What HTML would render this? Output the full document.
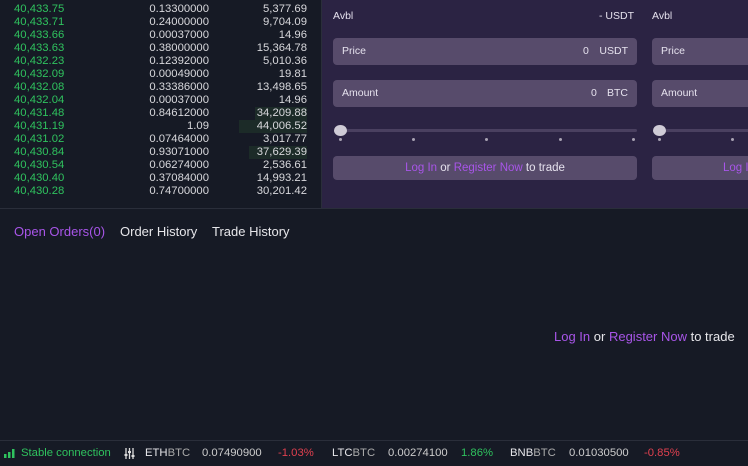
<!DOCTYPE html>
<html><head><style>
*{margin:0;padding:0;box-sizing:border-box}
body{width:748px;height:465px;background:#161a25;font-family:"Liberation Sans",sans-serif;position:relative;overflow:hidden;color:#e6e6ea}
.ob{position:absolute;left:0;top:0;width:321px;height:208px;background:#161a25}
.row{position:absolute;left:0;width:321px;height:13px;font-size:11.3px;line-height:13px}
.row .p{position:absolute;left:14px;color:#2fc25e}
.row .a{position:absolute;right:112px;color:#d8d8dc}
.row .t{position:absolute;right:14px;color:#d8d8dc}
.row .bar{position:absolute;right:14px;top:0;height:13px;background:#1c2b28}
.vline{position:absolute;left:321px;top:0;width:1px;height:208px;background:#2a2e3a}
.panel{position:absolute;left:322px;top:0;width:426px;height:208px;background:#2b2343}
.hl{position:absolute;left:0;top:208px;width:748px;height:1px;background:#2a2e3a}
.lbl{position:absolute;font-size:10.5px;color:#e6e2ee}
.inp{position:absolute;height:27px;background:#574b6b;border-radius:4px;font-size:10.5px;line-height:27px;color:#e6e2ee}
.btn{position:absolute;height:24px;background:#574b6b;border-radius:4px;font-size:11.5px;line-height:24px;text-align:center;color:#e6e2ee}
.pu{color:#a855e8}
.track{position:absolute;height:3px;background:#4a4060;border-radius:2px}
.knob{position:absolute;width:13px;height:11px;border-radius:50%;background:#cfcbd6}
.dot{position:absolute;width:3px;height:3px;border-radius:50%;background:#a9a3b3}
.tabs{position:absolute;top:224px;font-size:13px}
.foot{position:absolute;left:0;top:440px;width:748px;height:25px;border-top:1px solid #2a2e3a;font-size:11.3px;line-height:25px}
.foot span{position:absolute;top:0}
.foot .ic{line-height:0}
</style></head><body>
<div class="ob">
<div class="row" style="top:3px"><span class="p">40,433.75</span><span class="a">0.13300000</span><span class="t">5,377.69</span></div>
<div class="row" style="top:16px"><span class="p">40,433.71</span><span class="a">0.24000000</span><span class="t">9,704.09</span></div>
<div class="row" style="top:29px"><span class="p">40,433.66</span><span class="a">0.00037000</span><span class="t">14.96</span></div>
<div class="row" style="top:42px"><span class="p">40,433.63</span><span class="a">0.38000000</span><span class="t">15,364.78</span></div>
<div class="row" style="top:55px"><span class="p">40,432.23</span><span class="a">0.12392000</span><span class="t">5,010.36</span></div>
<div class="row" style="top:68px"><span class="p">40,432.09</span><span class="a">0.00049000</span><span class="t">19.81</span></div>
<div class="row" style="top:81px"><span class="p">40,432.08</span><span class="a">0.33386000</span><span class="t">13,498.65</span></div>
<div class="row" style="top:94px"><span class="p">40,432.04</span><span class="a">0.00037000</span><span class="t">14.96</span></div>
<div class="row" style="top:107px"><div class="bar" style="width:52px"></div><span class="p">40,431.48</span><span class="a">0.84612000</span><span class="t">34,209.88</span></div>
<div class="row" style="top:120px"><div class="bar" style="width:68px"></div><span class="p">40,431.19</span><span class="a">1.09</span><span class="t">44,006.52</span></div>
<div class="row" style="top:133px"><span class="p">40,431.02</span><span class="a">0.07464000</span><span class="t">3,017.77</span></div>
<div class="row" style="top:146px"><div class="bar" style="width:58px"></div><span class="p">40,430.84</span><span class="a">0.93071000</span><span class="t">37,629.39</span></div>
<div class="row" style="top:159px"><span class="p">40,430.54</span><span class="a">0.06274000</span><span class="t">2,536.61</span></div>
<div class="row" style="top:172px"><span class="p">40,430.40</span><span class="a">0.37084000</span><span class="t">14,993.21</span></div>
<div class="row" style="top:185px"><span class="p">40,430.28</span><span class="a">0.74700000</span><span class="t">30,201.42</span></div>
</div>
<div class="vline"></div>
<div class="panel">
<div class="lbl" style="left:11px;top:10px">Avbl</div>
<div class="lbl" style="left:277px;top:10px">- USDT</div>
<div class="inp" style="left:11px;top:38px;width:304px"><span style="position:absolute;left:9px">Price</span><span style="position:absolute;left:250px">0</span><span style="position:absolute;right:9px">USDT</span></div>
<div class="inp" style="left:11px;top:80px;width:304px"><span style="position:absolute;left:9px">Amount</span><span style="position:absolute;left:258px">0</span><span style="position:absolute;right:9px">BTC</span></div>
<div class="track" style="left:15px;top:129px;width:300px"></div>
<div class="knob" style="left:12px;top:125px"></div>
<div class="dot" style="left:17px;top:138px"></div><div class="dot" style="left:90px;top:138px"></div><div class="dot" style="left:163px;top:138px"></div><div class="dot" style="left:237px;top:138px"></div><div class="dot" style="left:310px;top:138px"></div>
<div class="btn" style="left:11px;top:156px;width:304px"><span class="pu">Log In</span> or <span class="pu">Register Now</span> to trade</div>
<div class="lbl" style="left:330px;top:10px">Avbl</div>
<div class="inp" style="left:330px;top:38px;width:110px"><span style="position:absolute;left:9px">Price</span></div>
<div class="inp" style="left:330px;top:80px;width:110px"><span style="position:absolute;left:9px">Amount</span></div>
<div class="track" style="left:334px;top:129px;width:100px"></div>
<div class="knob" style="left:331px;top:125px"></div>
<div class="dot" style="left:336px;top:138px"></div><div class="dot" style="left:409px;top:138px"></div>
<div class="btn" style="left:330px;top:156px;width:110px;text-align:left;padding-left:71px"><span class="pu">Log In</span></div>
</div>
<div class="hl"></div>
<div class="tabs" style="left:14px;color:#a855e8">Open Orders(0)</div>
<div class="tabs" style="left:120px">Order History</div>
<div class="tabs" style="left:212px">Trade History</div>
<div style="position:absolute;left:554px;top:329px;font-size:13px"><span class="pu">Log In</span> or <span class="pu">Register Now</span> to trade</div>
<div class="foot">
<span class="ic" style="left:4px;top:8px">
<svg width="11" height="9"><rect x="0" y="5" width="2.5" height="4" fill="#2fc25e"/><rect x="4" y="3" width="2.5" height="6" fill="#2fc25e"/><rect x="8" y="0" width="2.5" height="9" fill="#2fc25e"/></svg></span>
<span style="left:21px;color:#2fc25e">Stable connection</span>
<span class="ic" style="left:124px;top:7px"><svg width="11" height="11"><g stroke="#ddd" stroke-width="1.3"><line x1="2" y1="0" x2="2" y2="11"/><line x1="5.5" y1="0" x2="5.5" y2="11"/><line x1="9" y1="0" x2="9" y2="11"/></g><rect x="0.5" y="6" width="3" height="2" fill="#ddd"/><rect x="4" y="3" width="3" height="2" fill="#ddd"/><rect x="7.5" y="7" width="3" height="2" fill="#ddd"/></svg></span>
<span style="left:145px">ETH<span style="color:#aaa">BTC</span></span>
<span style="left:202px;color:#ccc">0.07490900</span>
<span style="left:278px;color:#e0404f">-1.03%</span>
<span style="left:332px">LTC<span style="color:#aaa">BTC</span></span>
<span style="left:388px;color:#ccc">0.00274100</span>
<span style="left:461px;color:#2fc25e">1.86%</span>
<span style="left:510px">BNB<span style="color:#aaa">BTC</span></span>
<span style="left:569px;color:#ccc">0.01030500</span>
<span style="left:644px;color:#e0404f">-0.85%</span>
</div>
</body></html>
